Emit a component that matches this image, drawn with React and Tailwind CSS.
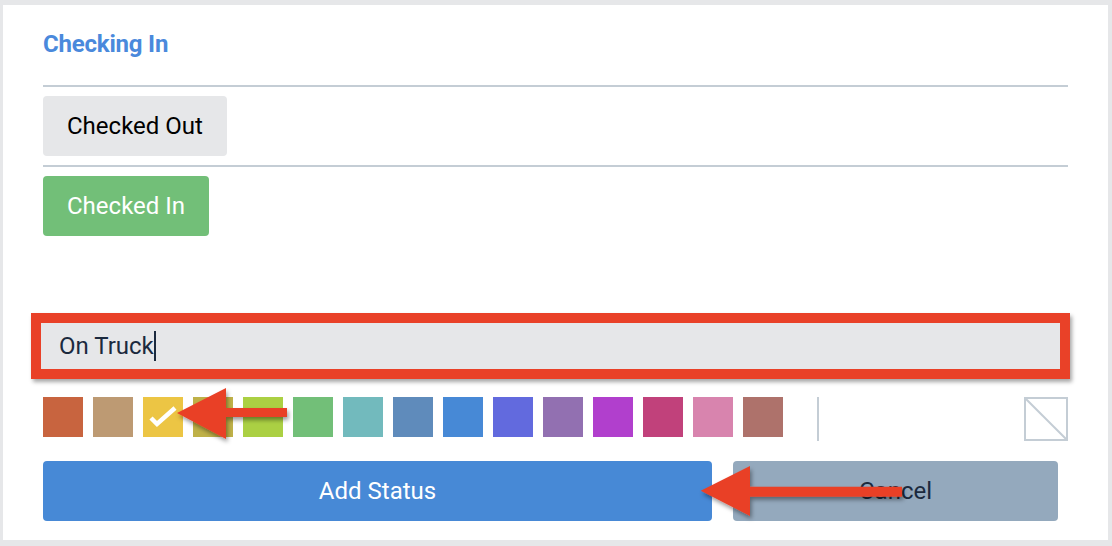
import React from 'react';

const swatches = [
  '#c8643f', '#bd9a73', '#ecc544', '#bfb148', '#abd043',
  '#72bf78', '#72babd', '#5f8bbb', '#4789d6', '#626ade',
  '#9270b1', '#b13fcd', '#c1417b', '#d884ae', '#ae726b',
];

const Arrow = ({ className, width, height, points }) => (
  <svg className={className} width={width} height={height} viewBox={`0 0 ${width} ${height}`}>
    <defs>
      <filter id="arrowShadow" x="-20%" y="-20%" width="140%" height="150%">
        <feDropShadow dx="1.5" dy="3" stdDeviation="2" floodColor="#000" floodOpacity="0.4" />
      </filter>
    </defs>
    <polygon points={points} fill="#e94128" filter="url(#arrowShadow)" />
  </svg>
);

const App = () => {
  return (
    <div
      className="w-[1112px] h-[546px] bg-[#e6e7e9] pt-[5px] pl-[3px] overflow-hidden"
      style={{ fontFamily: 'Roboto, "Noto Sans", sans-serif' }}
    >
      <div className="relative w-[1105px] h-[535px] bg-white pt-[25px] px-[40px]">
        {/* Heading */}
        <h2 className="text-[24px] leading-[28px] font-bold text-[#4a89dc] tracking-[-0.2px]">Checking In</h2>

        {/* Status list */}
        <div className="mt-[27px] h-[2px] bg-[#c4cdd5]" />
        <div className="mt-[9px]">
          <button className="h-[60px] px-[24px] rounded-[4px] bg-[#e6e7e9] text-black text-[24px]">
            Checked Out
          </button>
        </div>
        <div className="mt-[9px] h-[2px] bg-[#c4cdd5]" />
        <div className="mt-[9px]">
          <button className="h-[60px] px-[24px] rounded-[4px] bg-[#72bf78] text-white text-[24px]">
            Checked In
          </button>
        </div>

        {/* Name input, highlighted */}
        <div className="mt-[77px] ml-[-12px] w-[1039px] h-[66px] border-[10px] border-[#e94128] bg-[#e6e7e9] shadow-[2px_3px_4px_rgba(0,0,0,0.35)] flex items-center pl-[18px]">
          <span className="text-[24px] leading-[46px] text-[#1b2a3e]">On Truck</span>
          <span className="inline-block w-[2px] h-[30px] bg-[#1b2a3e]" />
        </div>

        {/* Colour picker */}
        <div className="mt-[18px] flex items-start">
          <div className="flex gap-[10px]">
            {swatches.map((c, i) => (
              <div key={c} className="w-[40px] h-[40px] flex items-center justify-center" style={{ backgroundColor: c }}>
                {i === 2 && (
                  <svg width="40" height="40" viewBox="0 0 40 40">
                    <polyline points="8,21 14,27 32,11" fill="none" stroke="#fff" strokeWidth="4.5" />
                  </svg>
                )}
              </div>
            ))}
          </div>
          <div className="ml-[34px] w-[2px] h-[44px] bg-[#c4cdd5]" />
          <div className="ml-auto w-[44px] h-[44px] border-2 border-[#c4cdd5]">
            <svg width="40" height="40" viewBox="0 0 40 40">
              <line x1="0" y1="0" x2="40" y2="40" stroke="#c4cdd5" strokeWidth="2" />
            </svg>
          </div>
        </div>

        {/* Actions */}
        <div className="mt-[20px] flex gap-[21px] w-[1015px]">
          <button className="w-[669px] h-[60px] rounded-[4px] bg-[#4789d6] text-white text-[24px]">
            Add Status
          </button>
          <button className="flex-1 h-[60px] rounded-[4px] bg-[#94a9bd] text-[#1b2a3e] text-[24px]">
            Cancel
          </button>
        </div>

        {/* Annotation arrows */}
        <Arrow
          className="absolute left-[170px] top-[378px]"
          width={125}
          height={66}
          points="4,30 53,5 53,25 114,25 114,34 53,34 53,56"
        />
        <Arrow
          className="absolute left-[693px] top-[455px]"
          width={215}
          height={65}
          points="4.7,30.7 54,6 54,26.7 206,26.7 206,36.7 54,36.7 54,56"
        />
      </div>
    </div>
  );
};

export default App;
